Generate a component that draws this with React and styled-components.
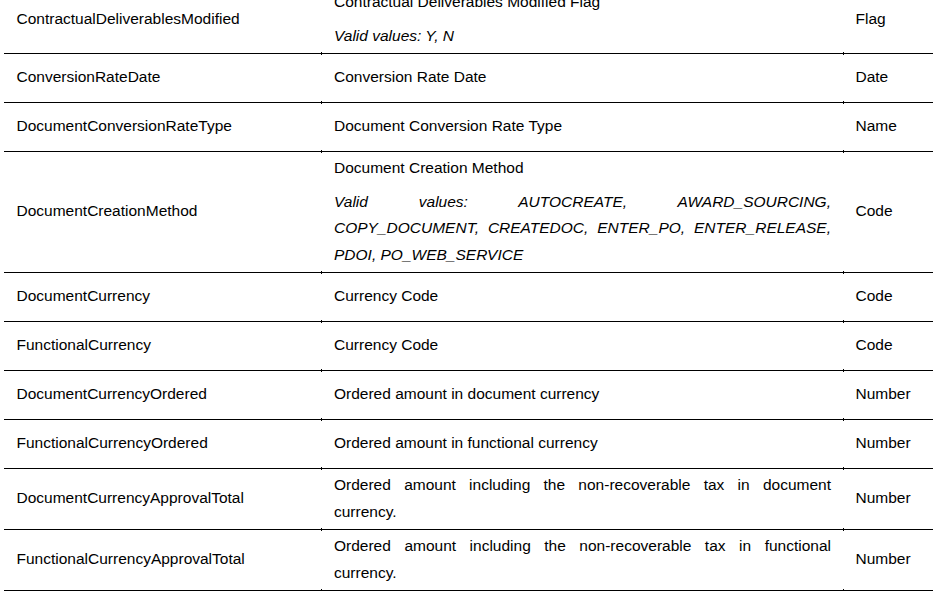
import React from 'react';
import styled, { createGlobalStyle } from 'styled-components';

const GlobalStyle = createGlobalStyle`
  html, body {
    margin: 0;
    padding: 0;
    background: #fff;
    overflow: hidden;
  }
  body {
    font-family: "Liberation Sans", Arial, sans-serif;
    font-size: 15.5px;
    color: #000;
  }
`;

const Table = styled.div`
  width: 929px;
  margin: -14px 0 0 4px;
`;

const Row = styled.div`
  display: grid;
  grid-template-columns: 317.5px 521.5px 90px;
  min-height: 48px;
  border-bottom: 1px solid #000;
`;

const Cell = styled.div`
  position: relative;
  display: flex;
  flex-direction: column;
  justify-content: center;
  gap: 7px;
  padding: 3px 12px 4px 12.5px;
  line-height: 26.5px;
  text-align: ${({ $justify }) => ($justify ? 'justify' : 'left')};

  &::before {
    content: ${({ $tick }) => ($tick ? "''" : 'none')};
    position: absolute;
    left: -0.5px;
    bottom: -2px;
    width: 1px;
    height: 3px;
    background: #000;
  }
`;

const Para = styled.p`
  margin: 0;
  font-style: ${({ $italic }) => ($italic ? 'italic' : 'normal')};
`;

const rows = [
  {
    name: 'ContractualDeliverablesModified',
    desc: 'Contractual Deliverables Modified Flag',
    values: 'Y, N',
    type: 'Flag',
  },
  { name: 'ConversionRateDate', desc: 'Conversion Rate Date', type: 'Date' },
  {
    name: 'DocumentConversionRateType',
    desc: 'Document Conversion Rate Type',
    type: 'Name',
  },
  {
    name: 'DocumentCreationMethod',
    desc: 'Document Creation Method',
    values:
      'AUTOCREATE, AWARD_SOURCING, COPY_DOCUMENT, CREATEDOC, ENTER_PO, ENTER_RELEASE, PDOI, PO_WEB_SERVICE',
    type: 'Code',
  },
  { name: 'DocumentCurrency', desc: 'Currency Code', type: 'Code' },
  { name: 'FunctionalCurrency', desc: 'Currency Code', type: 'Code' },
  {
    name: 'DocumentCurrencyOrdered',
    desc: 'Ordered amount in document currency',
    type: 'Number',
  },
  {
    name: 'FunctionalCurrencyOrdered',
    desc: 'Ordered amount in functional currency',
    type: 'Number',
  },
  {
    name: 'DocumentCurrencyApprovalTotal',
    desc: 'Ordered amount including the non-recoverable tax in document currency.',
    type: 'Number',
  },
  {
    name: 'FunctionalCurrencyApprovalTotal',
    desc: 'Ordered amount including the non-recoverable tax in functional currency.',
    type: 'Number',
  },
];

const App = () => {
  return <>
    <GlobalStyle/>
    <Table>
      {rows.map((row) => (
        <Row key={row.name}>
          <Cell>{row.name}</Cell>
          <Cell $tick $justify>
            <Para>{row.desc}</Para>
            {row.values && <Para $italic>Valid values: {row.values}</Para>}
          </Cell>
          <Cell $tick>{row.type}</Cell>
        </Row>
      ))}
    </Table>
  </>;
};

export default App;
